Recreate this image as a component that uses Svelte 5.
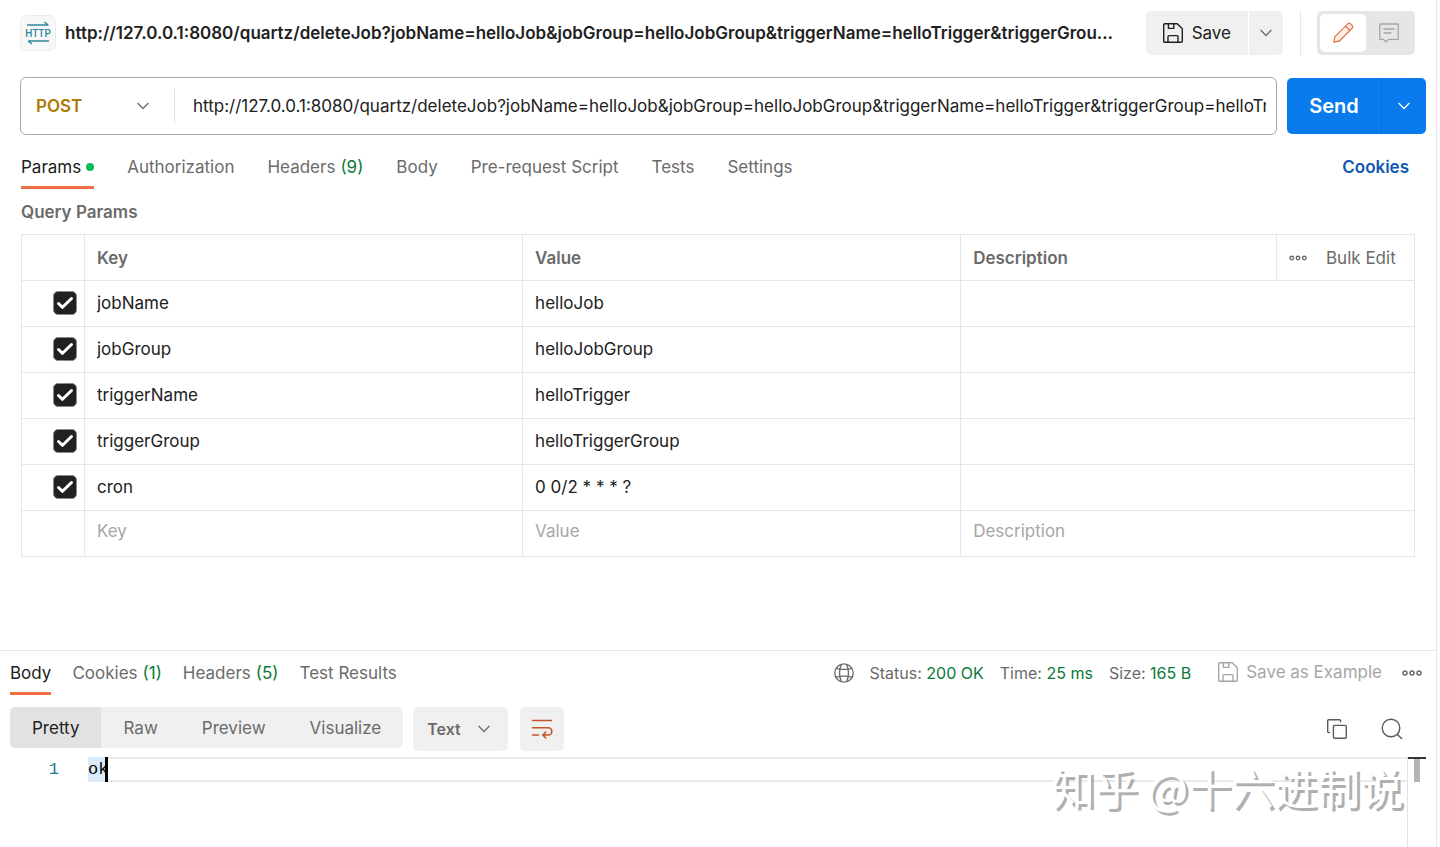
<script lang="ts">
  type Param = { key: string; value: string; description: string; enabled: boolean };
  type Tab = { label: string; count?: number; dot?: boolean };

  let params: Param[] = $state([
    { key: 'jobName', value: 'helloJob', description: '', enabled: true },
    { key: 'jobGroup', value: 'helloJobGroup', description: '', enabled: true },
    { key: 'triggerName', value: 'helloTrigger', description: '', enabled: true },
    { key: 'triggerGroup', value: 'helloTriggerGroup', description: '', enabled: true },
    { key: 'cron', value: '0 0/2 * * * ?', description: '', enabled: true },
  ]);

  let url = $state(
    'http://127.0.0.1:8080/quartz/deleteJob?jobName=helloJob&jobGroup=helloJobGroup&triggerName=helloTrigger&triggerGroup=helloTriggerGroup&cron=0 0/2 * * * ?'
  );
  let method = $state('POST');
  let requestTab = $state('Params');
  let responseTab = $state('Body');
  let view = $state('Pretty');
  let mode = $state('edit');

  const requestTabs: Tab[] = [
    { label: 'Params', dot: true },
    { label: 'Authorization' },
    { label: 'Headers', count: 9 },
    { label: 'Body' },
    { label: 'Pre-request Script' },
    { label: 'Tests' },
    { label: 'Settings' },
  ];
  const responseTabs: Tab[] = [
    { label: 'Body' },
    { label: 'Cookies', count: 1 },
    { label: 'Headers', count: 5 },
    { label: 'Test Results' },
  ];
  const views = ['Pretty', 'Raw', 'Preview', 'Visualize'];
  const stats = [
    { label: 'Status:', value: '200 OK' },
    { label: 'Time:', value: '25 ms' },
    { label: 'Size:', value: '165 B' },
  ];
</script>

{#snippet chevron()}
  <svg class="chevron" width="12" height="8" viewBox="0 0 12 8" fill="none" stroke="currentColor" aria-hidden="true">
    <path stroke-width="1.3" d="M0.6 1 6 6.5 11.4 1" />
  </svg>
{/snippet}

{#snippet floppy()}
  <svg width="20" height="20" viewBox="0 0 20 20" fill="none" stroke="currentColor" stroke-width="1.4" stroke-linejoin="round" aria-hidden="true">
    <path d="M1.7.8h12.6l5 5v12.5a1 1 0 0 1-1 1H1.7a1 1 0 0 1-1-1V1.8a1 1 0 0 1 1-1z" />
    <path d="M5.4.8v4.6h5.4V.8M5 19.2v-5.6a1 1 0 0 1 1-1h8a1 1 0 0 1 1 1v5.6" />
  </svg>
{/snippet}

{#snippet dots(size: number)}
  <svg width={size} height="6" viewBox="0 0 20 6" fill="none" stroke="currentColor" stroke-width="1.5" aria-hidden="true">
    <circle cx="3" cy="3" r="2" />
    <circle cx="10" cy="3" r="2" />
    <circle cx="17" cy="3" r="2" />
  </svg>
{/snippet}

<main class="frame">
  <header class="title-row">
    <span class="http-icon">
      <svg width="26" height="24" viewBox="0 0 26 24" fill="none" stroke="#2c8799" stroke-width="1.4" aria-hidden="true">
        <path d="M2 4h21.500M19.500 1l3.500 3M24 20H3.500M7 23l-4-3" />
        <text x="13" y="16" text-anchor="middle">HTTP</text>
      </svg>
    </span>
    <h1>{url}</h1>
    <div class="save-group">
      <button class="save">{@render floppy()}Save</button>
      <button class="save-more" aria-label="More save options">{@render chevron()}</button>
    </div>
    <div class="divider"></div>
    <div class="mode-toggle">
      <button class:active={mode === 'edit'} aria-label="Edit" onclick={() => (mode = 'edit')}>
        <svg width="22" height="22" viewBox="0 0 22 22" fill="none" stroke="currentColor" stroke-width="1.3" stroke-linejoin="round">
          <path fill="#fff1e6" d="M1.8 20.2 3 14.6 15.7 1.9a2 2 0 0 1 2.8 0l1.6 1.6a2 2 0 0 1 0 2.8L7.4 19z" />
          <path d="m13.5 4.1 4.4 4.4" />
        </svg>
      </button>
      <button class:active={mode === 'comment'} aria-label="Comments" onclick={() => (mode = 'comment')}>
        <svg width="20" height="20" viewBox="0 0 20 20" fill="none" stroke="currentColor" stroke-width="1.3" stroke-linejoin="round">
          <path d="M.8 1h18.400v15.400H9.600L7 18.800l-2.600-2.400H.8zM4.500 6h11M4.500 10h8" />
        </svg>
      </button>
    </div>
  </header>

  <form class="url-row" onsubmit={(e) => e.preventDefault()}>
    <div class="url-box">
      <div class="method">
        <select bind:value={method} aria-label="HTTP method">
          <option>GET</option>
          <option>POST</option>
          <option>PUT</option>
          <option>DELETE</option>
        </select>
        {@render chevron()}
      </div>
      <input class="url" type="text" bind:value={url} aria-label="Request URL" />
    </div>
    <div class="send-group">
      <button class="send" type="submit">Send</button>
      <button class="send-more" type="button" aria-label="More send options">{@render chevron()}</button>
    </div>
  </form>

  <nav class="tabs request-tabs">
    {#each requestTabs as tab}
      <button class="tab" class:active={requestTab === tab.label} onclick={() => (requestTab = tab.label)}>
        {tab.label}
        {#if tab.count}<span class="count">({tab.count})</span>{/if}
        {#if tab.dot}<span class="dot"></span>{/if}
      </button>
    {/each}
    <a class="cookies" href="#cookies">Cookies</a>
  </nav>

  <section class="params">
    <h2>Query Params</h2>
    <table>
      <colgroup>
        <col class="col-check" />
        <col class="col-key" />
        <col class="col-value" />
        <col />
        <col class="col-actions" />
      </colgroup>
      <thead>
        <tr>
          <th aria-label="Enabled"></th>
          <th>Key</th>
          <th>Value</th>
          <th>Description</th>
          <th>
            <div class="actions">
              <button aria-label="More columns">{@render dots(18)}</button>
              <button>Bulk Edit</button>
            </div>
          </th>
        </tr>
      </thead>
      <tbody>
        {#each params as param}
          <tr>
            <td>
              <label class="check">
                <input type="checkbox" bind:checked={param.enabled} aria-label="Enable {param.key}" />
                <svg width="18" height="14" viewBox="0 0 18 14" fill="none" stroke="#fff" stroke-width="3" stroke-linecap="round" stroke-linejoin="round" aria-hidden="true">
                  <path d="M2.500 7.500 6.500 11.300 15.500 2.500" />
                </svg>
              </label>
            </td>
            <td><input type="text" bind:value={param.key} aria-label="Key" /></td>
            <td><input type="text" bind:value={param.value} aria-label="Value" /></td>
            <td colspan="2"><input type="text" bind:value={param.description} aria-label="Description" /></td>
          </tr>
        {/each}
        <tr class="new-row">
          <td></td>
          <td><input type="text" placeholder="Key" aria-label="New key" /></td>
          <td><input type="text" placeholder="Value" aria-label="New value" /></td>
          <td colspan="2"><input type="text" placeholder="Description" aria-label="New description" /></td>
        </tr>
      </tbody>
    </table>
  </section>

  <section class="response">
    <div class="response-head">
      <nav class="tabs">
        {#each responseTabs as tab}
          <button class="tab" class:active={responseTab === tab.label} onclick={() => (responseTab = tab.label)}>
            {tab.label}
            {#if tab.count}<span class="count">({tab.count})</span>{/if}
          </button>
        {/each}
      </nav>
      <div class="stats">
        <svg width="20" height="20" viewBox="0 0 20 20" fill="none" stroke="currentColor" stroke-width="1.3" aria-hidden="true">
          <circle cx="10" cy="10" r="9.2" />
          <path d="M7.400 1.200c-2.400 5.600-2.400 12 0 17.600M12.600 1.200c2.400 5.600 2.400 12 0 17.600M2.200 5.400c4.800 1.200 10.800 1.200 15.600 0M1.600 14.200c5.200-1.400 11.600-1.400 16.800 0" />
        </svg>
        {#each stats as stat}
          <span>{stat.label} <b>{stat.value}</b></span>
        {/each}
      </div>
      <button class="save-example">{@render floppy()}Save as Example</button>
      <button class="more" aria-label="More response actions">{@render dots(20)}</button>
    </div>

    <div class="toolbar">
      <div class="views">
        {#each views as name}
          <button class:active={view === name} onclick={() => (view = name)}>{name}</button>
        {/each}
      </div>
      <div class="format">
        <select aria-label="Response format">
          <option>Text</option>
          <option>JSON</option>
          <option>XML</option>
          <option>HTML</option>
        </select>
        {@render chevron()}
      </div>
      <button class="wrap" aria-label="Wrap lines">
        <svg width="22" height="20" viewBox="0 0 22 20" fill="none" stroke="currentColor" stroke-width="1.6" stroke-linecap="round" stroke-linejoin="round">
          <path d="M1.500 1.500h19M1.500 8.800h15.700a3.500 3.500 0 0 1 0 7.200h-5M14.800 13 11.800 16l3 3M1.500 16h6" />
        </svg>
      </button>
      <div class="tools">
        <button aria-label="Copy">
          <svg width="20" height="20" viewBox="0 0 20 20" fill="none" stroke="currentColor" stroke-width="1.4" stroke-linejoin="round">
            <path d="M3.200 13.600H1.700a1 1 0 0 1-1-1V1.700a1 1 0 0 1 1-1h10.900a1 1 0 0 1 1 1v1.500" />
            <rect x="6.400" y="6.400" width="12.900" height="12.900" rx="1.200" />
          </svg>
        </button>
        <button aria-label="Search">
          <svg width="22" height="22" viewBox="0 0 22 22" fill="none" stroke="currentColor" stroke-width="1.4">
            <circle cx="10" cy="10" r="8.800" />
            <path d="m16.200 16.200 4.800 4.800" />
          </svg>
        </button>
      </div>
    </div>

    <div class="editor">
      <div class="line-number">1</div>
      <div class="code"><code>ok</code></div>
      <div class="ruler"><span></span></div>
      <div class="watermark">知乎 @十六进制说</div>
    </div>
  </section>
</main>

<style>
  :global(body) {
    background: #fff;
  }

  .frame {
    display: flex;
    flex-direction: column;
    box-sizing: border-box;
    min-height: 100vh;
    margin-right: 3px;
    border-right: 1px solid #e9e9e9;
    font-family: Inter, sans-serif;
    font-size: 17px;
    line-height: 22px;
    color: #212121;
  }

  button,
  input,
  select {
    margin: 0;
    padding: 0;
    border: none;
    background: none;
    font: inherit;
    color: inherit;
    outline: none;
  }

  button,
  select {
    cursor: pointer;
  }

  select {
    appearance: none;
  }

  svg {
    display: block;
    flex: none;
  }

  .title-row {
    display: flex;
    align-items: center;
    padding: 11px 21px 0 20px;
  }

  .http-icon {
    display: flex;
    align-items: center;
    justify-content: center;
    flex: none;
    box-sizing: border-box;
    width: 36px;
    height: 36px;
    margin-right: 9px;
    border: 1px solid #ececec;
    border-radius: 7px;
    background: #f8f8f8;
  }

  .http-icon text {
    stroke: none;
    fill: #2c8799;
    font-family: Roboto, sans-serif;
    font-size: 10px;
    font-weight: 500;
  }

  .title-row h1 {
    flex: 1;
    min-width: 0;
    margin: 0 30px 0 0;
    overflow: hidden;
    text-overflow: ellipsis;
    white-space: nowrap;
    font-size: 17px;
    font-weight: 600;
  }

  .save-group {
    display: flex;
    gap: 1px;
    height: 44px;
  }

  .save {
    display: flex;
    align-items: center;
    gap: 9px;
    padding: 0 17px;
    border-radius: 5px 0 0 5px;
    background: #f0f0f0;
  }

  .save-more {
    display: flex;
    align-items: center;
    justify-content: center;
    width: 34px;
    border-radius: 0 5px 5px 0;
    background: #f0f0f0;
    color: #6b6b6b;
  }

  .divider {
    width: 1px;
    height: 44px;
    margin: 0 16px 0 17px;
    background: #e6e6e6;
  }

  .mode-toggle {
    display: flex;
    box-sizing: border-box;
    height: 44px;
    padding: 3px;
    border-radius: 5px;
    background: #e6e6e6;
  }

  .mode-toggle button {
    display: flex;
    align-items: center;
    justify-content: center;
    width: 46px;
    border-radius: 5px;
    color: #a6a6a6;
  }

  .mode-toggle .active {
    background: #fff;
    color: #e0784e;
  }

  .url-row {
    display: flex;
    align-items: center;
    gap: 10px;
    padding: 22px 10px 0 20px;
  }

  .url-box {
    display: flex;
    align-items: center;
    flex: 1;
    min-width: 0;
    box-sizing: border-box;
    height: 58px;
    padding-right: 10px;
    border: 1px solid #a6a6a6;
    border-radius: 6px;
  }

  .method,
  .format {
    display: grid;
    align-items: center;
  }

  .method select,
  .method .chevron,
  .format select,
  .format .chevron {
    grid-area: 1 / 1;
  }

  .method .chevron,
  .format .chevron {
    justify-self: end;
    color: #6b6b6b;
    pointer-events: none;
  }

  .method {
    width: 153px;
    height: 34px;
    border-right: 1px solid #e0e0e0;
  }

  .method select {
    padding-left: 15px;
    font-weight: 600;
    color: #ad7a03;
  }

  .method .chevron {
    margin-right: 25px;
  }

  .url {
    flex: 1;
    min-width: 0;
    margin-left: 18px;
  }

  .send-group {
    display: flex;
    height: 56px;
    border-radius: 5px;
    overflow: hidden;
    color: #fff;
  }

  .send {
    width: 94px;
    background: #097bed;
    font-size: 20px;
    font-weight: 600;
  }

  .send-more {
    display: flex;
    align-items: center;
    justify-content: center;
    width: 45px;
    border-left: 1px solid #0771d8;
    background: #097bed;
  }

  .tabs {
    display: flex;
    gap: 21px;
  }

  .request-tabs {
    gap: 33px;
    padding: 21px 27px 0 21px;
  }

  .tab {
    display: flex;
    align-items: center;
    gap: 5px;
    height: 33px;
    padding-bottom: 9px;
    box-sizing: border-box;
    border-bottom: 3px solid transparent;
    color: #6b6b6b;
    white-space: nowrap;
  }

  .tab.active {
    border-color: #ed6f43;
    color: #212121;
  }

  .count,
  .stats b {
    font-weight: 400;
    color: #0a7a37;
  }

  .dot {
    width: 8px;
    height: 8px;
    border-radius: 50%;
    background: #0cbb52;
  }

  .cookies {
    margin-left: auto;
    font-weight: 600;
    color: #1058b0;
    text-decoration: none;
  }

  .params {
    padding: 12px 21px 0;
  }

  .params h2 {
    margin: 0 0 11px;
    font-size: 17px;
    font-weight: 600;
    color: #6b6b6b;
  }

  table {
    width: 100%;
    table-layout: fixed;
    border-collapse: collapse;
  }

  .col-check {
    width: 63px;
  }

  .col-key,
  .col-value {
    width: 31.45%;
  }

  .col-actions {
    width: 138px;
  }

  th,
  td {
    box-sizing: border-box;
    height: 46px;
    padding: 0 12px;
    border: 1px solid #e6e6e6;
    text-align: left;
  }

  th {
    font-weight: 600;
    color: #6b6b6b;
  }

  .actions {
    display: flex;
    align-items: center;
    gap: 19px;
    font-weight: 400;
  }

  td input[type='text'] {
    display: block;
    width: 100%;
    padding-bottom: 2px;
  }

  td:first-child {
    padding: 0 7px 2px;
  }

  .new-row input[type='text'] {
    padding-bottom: 6px;
  }

  input::placeholder {
    color: #a6a6a6;
    opacity: 1;
  }

  .check {
    display: grid;
    justify-content: end;
    place-items: center;
  }

  .check input,
  .check svg {
    grid-area: 1 / 1;
  }

  .check input {
    appearance: none;
    width: 24px;
    height: 24px;
    box-sizing: border-box;
    border: 1px solid #8a8a8a;
    border-radius: 5px;
  }

  .check input:checked {
    background: #212121;
  }

  .check svg {
    pointer-events: none;
  }

  .response {
    display: flex;
    flex-direction: column;
    flex: 1;
    margin-top: 93px;
    border-top: 1px solid #e6e6e6;
  }

  .response-head {
    display: flex;
    align-items: center;
    padding: 10px 14px 0 10px;
    color: #6b6b6b;
  }

  .stats {
    display: flex;
    align-items: center;
    gap: 16px;
    margin-left: auto;
    padding-bottom: 11px;
    font-size: 16px;
    white-space: nowrap;
  }

  .save-example {
    display: flex;
    align-items: center;
    gap: 8px;
    margin: 0 20px 0 27px;
    padding-bottom: 13px;
    color: #a6a6a6;
    white-space: nowrap;
  }

  .more {
    padding-bottom: 11px;
  }

  .toolbar {
    display: flex;
    align-items: flex-start;
    padding: 11px 33px 0 10px;
    color: #6b6b6b;
  }

  .views {
    display: flex;
    height: 41px;
    margin-right: 10px;
    border-radius: 5px;
    overflow: hidden;
    background: #f0f0f0;
  }

  .views button {
    padding: 0 22px;
  }

  .views .active {
    background: #e2e2e2;
    color: #212121;
  }

  .format {
    width: 95px;
    height: 44px;
    margin-right: 12px;
    border-radius: 5px;
    background: #f0f0f0;
  }

  .format select {
    padding-left: 14px;
    font-size: 16px;
    font-weight: 600;
  }

  .format .chevron {
    margin-right: 18px;
  }

  .wrap {
    display: flex;
    align-items: center;
    justify-content: center;
    width: 44px;
    height: 44px;
    border-radius: 5px;
    background: #f0f0f0;
    color: #c4532c;
  }

  .tools {
    display: flex;
    align-items: center;
    gap: 34px;
    height: 44px;
    margin-left: auto;
  }

  .tools button {
    color: #5a5a5a;
  }

  .editor {
    position: relative;
    display: flex;
    flex: 1;
    min-height: 90px;
    margin: 6px 10px 0 0;
    font-family: 'Liberation Mono', monospace;
  }

  .line-number {
    width: 59px;
    padding-top: 2px;
    color: #237893;
    text-align: right;
  }

  .code {
    display: flex;
    flex: 1;
    box-sizing: border-box;
    height: 25px;
    margin-left: 29px;
    border: solid #eaeaea;
    border-width: 2px 0;
  }

  .code code {
    height: 25px;
    margin-top: -2px;
    padding-top: 2px;
    box-sizing: border-box;
    box-shadow: inset -3px 0 #000;
    background: #dcebfa;
    font: inherit;
    color: #000;
  }

  .ruler {
    box-sizing: border-box;
    width: 19px;
    border-left: 1px solid #e2e2e2;
  }

  .ruler span {
    display: block;
    width: 6px;
    height: 23px;
    padding: 0 6px;
    border-top: 2px solid #333;
    background: #b4b4b4 content-box;
  }

  .watermark {
    position: absolute;
    right: 23px;
    top: 5px;
    font-family: 'Noto Sans CJK SC', sans-serif;
    font-size: 43px;
    line-height: 48px;
    color: #fff;
    text-shadow: 3px 3px 0 #b0b0b0;
    white-space: nowrap;
    pointer-events: none;
  }
</style>
